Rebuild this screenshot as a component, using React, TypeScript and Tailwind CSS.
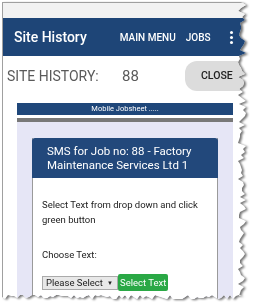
import { useMemo } from "react";

// deterministic jitter so the torn edge looks the same every run
function rand(seed: number) {
  const x = Math.sin(seed * 91.7 + 13.3) * 43758.5453;
  return x - Math.floor(x);
}

function tornEdge(right: number, bottom: number) {
  const pts: string[] = ["0px 0px"];
  for (let y = 0; y <= bottom; y += 3) {
    const x = right + Math.round((rand(y) - 0.5) * 8);
    pts.push(`${x}px ${y}px`);
  }
  for (let x = right; x >= 0; x -= 3) {
    const y = bottom + Math.round((rand(x + 500) - 0.5) * 5);
    pts.push(`${x}px ${y}px`);
  }
  pts.push(`0px ${bottom}px`);
  return `polygon(${pts.join(", ")})`;
}

export default function App() {
  const clip = useMemo(() => tornEdge(240, 295), []);

  return (
    <div className="h-[307px] w-[259px] overflow-hidden bg-white font-['Roboto',sans-serif]">
      <div className="ml-[2px] mt-[2px] h-[301px] w-[247px] [filter:drop-shadow(2px_1px_1px_rgba(0,0,0,0.55))]">
        <div style={{ clipPath: clip }} className="h-full w-full border-l border-t border-[#a0a0a0] bg-white">
          {/* status bar */}
          <div className="h-[15px] bg-[#f2f2f2]" />

          {/* app bar */}
          <div className="flex h-[38px] items-center bg-[#1e4577] pl-[11px] text-white">
            <span className="text-[14px] font-medium">Site History</span>
            <span className="ml-[33px] text-[10px] font-medium">MAIN MENU</span>
            <span className="ml-[10px] text-[10px] font-medium">JOBS</span>
            <span className="ml-[19px] flex flex-col gap-[2px]">
              <span className="h-[3px] w-[3px] rounded-full bg-white" />
              <span className="h-[3px] w-[3px] rounded-full bg-white" />
              <span className="h-[3px] w-[3px] rounded-full bg-white" />
            </span>
          </div>

          {/* title row */}
          <div className="flex h-[40px] items-center pl-[4px]">
            <span className="w-[115px] text-[14px] text-[#5a5a5a]">SITE HISTORY:</span>
            <span className="text-[15px] text-[#5a5a5a]">88</span>
            <button className="ml-auto flex h-[30px] w-[64px] items-center rounded-l-[12px] bg-[#dcdcdc] pl-[16px] text-[10.5px] font-medium text-[#222]">
              CLOSE
            </button>
          </div>

          {/* web view */}
          <div className="mt-[7px] w-[230px] pl-[14px]">
            <div className="flex h-[12px] items-center justify-center bg-[#1f477a] text-[7.5px] text-white">
              Mobile Jobsheet .....
            </div>
            <div className="mt-[3px] h-[4px] bg-[#787878]" />
            <div className="h-[200px] bg-[#e6e6f6] px-[15px] pt-[16px]">
              <div className="h-full border-x border-[#9a9a9a] bg-white">
                <div className="-mx-px flex h-[40px] items-center rounded-t-[3px] bg-[#22487b] px-[15px] text-[11.5px] leading-[14px] text-white">
                  SMS for Job no: 88 - Factory Maintenance Services Ltd 1
                </div>
                <div className="px-[9px] pt-[19px] text-[9.5px] leading-[15px] text-[#222]">
                  <p>Select Text from drop down and click green button</p>
                  <p className="mt-[20px]">Choose Text:</p>
                  <div className="mt-[12px] flex items-center">
                    <div className="flex h-[14px] w-[76px] items-center justify-between border border-[#aaa] bg-[#e8e8e8] pl-[3px] pr-[4px] text-[9.5px] leading-none">
                      <span>Please Select</span>
                      <span className="text-[6px]">▼</span>
                    </div>
                    <span className="flex h-[17px] items-center rounded-[2px] bg-[#2aa845] px-[2px] text-[9.5px] text-white">
                      Select Text
                    </span>
                  </div>
                </div>
              </div>
            </div>
          </div>
        </div>
      </div>
    </div>
  );
}
